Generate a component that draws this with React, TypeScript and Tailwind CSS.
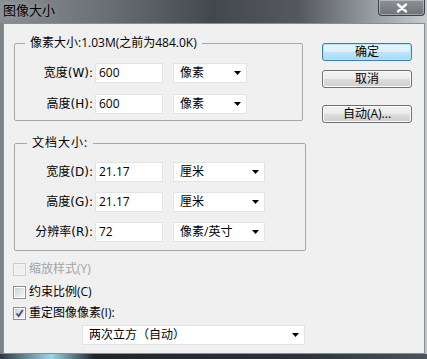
const Arrow = () => (
  <svg width="7" height="4" viewBox="0 0 7 4">
    <path d="M0 0h7L3.5 4z" fill="#000" />
  </svg>
);

const TextBox = ({ value }: { value: string }) => (
  <div className="w-[68px] h-[20px] bg-white border border-[#e3e3e3] pl-[3px] flex items-center">
    {value}
  </div>
);

const Select = ({ value, className }: { value: string; className: string }) => (
  <div
    className={`${className} h-[20px] bg-white border border-[#e3e3e3] pl-[6px] pr-[5px] flex items-center justify-between`}
  >
    <span>{value}</span>
    <Arrow />
  </div>
);

const Row = ({
  label,
  value,
  unit,
  selectW,
  className,
}: {
  label: string;
  value: string;
  unit: string;
  selectW: string;
  className: string;
}) => (
  <div className={`flex items-center ${className}`}>
    <span className="w-[80px] text-right pr-[2px] font-['DejaVu_Sans','Noto_Sans_CJK_SC',sans-serif] text-[12px]">
      {label}
    </span>
    <TextBox value={value} />
    <Select value={unit} className={`ml-[10px] ${selectW}`} />
  </div>
);

const Check = ({
  label,
  checked,
  disabled,
  className,
}: {
  label: string;
  checked?: boolean;
  disabled?: boolean;
  className: string;
}) => (
  <div className={`flex items-center h-[16px] ${className}`}>
    <div
      className={`w-[13px] h-[13px] border p-[1px] ${
        disabled ? "border-[#cdcdcd] bg-[#f4f4f4]" : "border-[#8e8f8f] bg-white"
      }`}
    >
      <div
        className={`w-full h-full flex items-center justify-center ${
          disabled
            ? "bg-[#f0f0f0]"
            : "bg-[linear-gradient(135deg,#cbcfd5,#f6f6f6)]"
        }`}
      >
        {checked && (
          <svg width="9" height="9" viewBox="0 0 9 9">
            <path d="M1.5 4.5 L3.7 7 L7.8 1" stroke="#3c4d8a" strokeWidth="1.8" fill="none" />
          </svg>
        )}
      </div>
    </div>
    <span className={`ml-[3px] ${disabled ? "text-[#a3a3a3]" : "text-black"}`}>{label}</span>
  </div>
);

const Button = ({ label, primary, className }: { label: string; primary?: boolean; className: string }) => (
  <button
    className={`w-[90px] h-[18px] rounded-[3px] border text-[12px] leading-none flex items-center justify-center ${className} ${
      primary
        ? "border-[#3c7fb1] bg-[linear-gradient(#eaf6fd,#d9f0fc_50%,#bee6fd_50%,#a7d9f5)] shadow-[inset_0_0_0_1px_#b5e3f8]"
        : "border-[#707070] bg-[linear-gradient(#f2f2f2,#ebebeb_50%,#dddddd_50%,#cfcfcf)] shadow-[inset_0_0_0_1px_#fcfcfc]"
    }`}
  >
    {label}
  </button>
);

export default function App() {
  return (
    <div className="w-[427px] h-[359px] overflow-hidden bg-[linear-gradient(90deg,#7d8287,#5a5f64_40%,#8c9196_85%,#c3c7cb)] font-['Open_Sans','Noto_Sans_CJK_SC',sans-serif] text-[12px] text-black flex flex-col">
      {/* title bar */}
      <div className="h-[23px] flex items-start justify-between bg-[linear-gradient(90deg,#8a8f94,#6a6f74_25%,#43484d_50%,#55595e_70%,#9aa0a5_88%,#c8ccd0)]">
        <span className="ml-[3px] mt-[2px] text-[13px] leading-[17px] text-black [text-shadow:0_0_6px_rgba(255,255,255,0.35)]">
          图像大小
        </span>
        <div className="w-[47px] h-[16px] mr-[2px] rounded-b-[4px] border border-t-0 border-[#3b4046] shadow-[inset_0_0_0_1px_rgba(255,255,255,0.35)] bg-[linear-gradient(#8d9297,#6d7277)] flex items-center justify-center">
          <svg width="12" height="10" viewBox="0 0 12 10">
            <path d="M2 1.5 L10 8.5 M10 1.5 L2 8.5" stroke="#fff" strokeWidth="2.4" strokeLinecap="round" />
          </svg>
        </div>
      </div>

      {/* client */}
      <div className="ml-[3px] w-[422px] h-[331px] border border-[#8a8d90] bg-[#f0f0f0] flex">
        <div className="ml-[9px] w-[293px] flex flex-col">
          <fieldset className="ml-[1px] mt-[11px] w-[289px] h-[86px] border border-[#a8a8a8] rounded-[2px]">
            <legend className="ml-[10px] px-[5px] leading-[16px]">像素大小:1.03M(之前为484.0K)</legend>
            <Row className="mt-[12px]" label="宽度(W):" value="600" unit="像素" selectW="w-[74px]" />
            <Row className="mt-[11px]" label="高度(H):" value="600" unit="像素" selectW="w-[74px]" />
          </fieldset>

          <fieldset className="ml-[1px] mt-[14px] w-[292px] h-[116px] border border-[#a8a8a8] rounded-[2px]">
            <legend className="ml-[12px] px-[5px] leading-[16px] tracking-[1px]">文档大小:</legend>
            <Row className="mt-[11px]" label="宽度(D):" value="21.17" unit="厘米" selectW="w-[92px]" />
            <Row className="mt-[10px]" label="高度(G):" value="21.17" unit="厘米" selectW="w-[92px]" />
            <Row className="mt-[10px]" label="分辨率(R):" value="72" unit="像素/英寸" selectW="w-[92px]" />
          </fieldset>

          <Check className="mt-[10px]" label="缩放样式(Y)" disabled />
          <Check className="mt-[7px]" label="约束比例(C)" />
          <Check className="mt-[5px]" label="重定图像像素(I):" checked />

          <Select value="两次立方（自动）" className="ml-[69px] mt-[4px] w-[223px]" />
        </div>

        <div className="ml-[16px] mt-[19px] flex flex-col">
          <Button primary label="确定" className="" />
          <Button label="取消" className="mt-[9px]" />
          <Button label="自动(A)..." className="mt-[17px]" />
        </div>
      </div>

      <div className="flex-1 bg-[linear-gradient(90deg,#2c3a44,#9fd3ea_12%,#1d262d_22%,#2a333b_70%,#4a5560)]" />
    </div>
  );
}
